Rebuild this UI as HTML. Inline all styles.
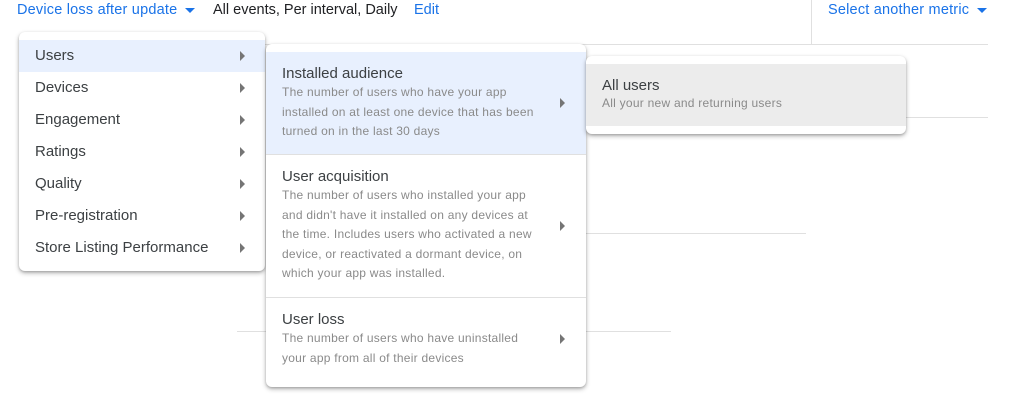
<!DOCTYPE html>
<html><head><style>
*{margin:0;padding:0;box-sizing:border-box}
body{width:1012px;height:406px;overflow:hidden;background:#fff;font-family:"Liberation Sans",sans-serif;position:relative;color:#3c4043}
.a{position:absolute}
.line{position:absolute;background:#e0e0e0}
.menu{position:absolute;background:#fff;border-radius:6px;box-shadow:0 2px 5px rgba(0,0,0,.3),0 1px 2px rgba(0,0,0,.15)}
.arr{position:absolute;width:0;height:0;border-top:5px solid transparent;border-bottom:5px solid transparent;border-left:5px solid #757575}
.t{position:absolute;left:16px;font-size:15px;color:#3c4043}
.d{position:absolute;left:16px;font-size:12px;letter-spacing:.25px;line-height:19.5px;color:#8a8a8a;width:258px}
.blue{color:#1a73e8}
.tri{display:inline-block;width:0;height:0;border-left:5px solid transparent;border-right:5px solid transparent;border-top:5px solid #1a73e8;vertical-align:middle;margin-left:8px}
</style></head><body>
<div class="a blue" style="left:17px;top:2px;font-size:14.5px;letter-spacing:.2px">Device loss after update<span class="tri"></span></div>
<div class="a" style="left:213px;top:2px;font-size:14.5px;color:#202124">All events, Per interval, Daily</div>
<div class="a blue" style="left:414px;top:2px;font-size:14.5px">Edit</div>
<div class="a blue" style="left:828px;top:2px;font-size:14.5px;letter-spacing:.2px">Select another metric<span class="tri"></span></div>
<div class="line" style="left:811px;top:0;width:1px;height:44px"></div>
<div class="line" style="left:230px;top:44px;width:758px;height:1px"></div>
<div class="line" style="left:900px;top:117px;width:88px;height:1px"></div>
<div class="line" style="left:586px;top:233px;width:220px;height:1px"></div>
<div class="line" style="left:237px;top:331px;width:434px;height:1px"></div>

<div class="menu" style="left:19px;top:32px;width:246px;height:239px">
 <div style="position:absolute;left:0;right:0;top:8px;height:32px;background:#e8f0fe"></div>
 <div class="t" style="top:15px">Users</div><div class="arr" style="left:221px;top:19px"></div>
 <div class="t" style="top:47px">Devices</div><div class="arr" style="left:221px;top:51px"></div>
 <div class="t" style="top:79px">Engagement</div><div class="arr" style="left:221px;top:83px"></div>
 <div class="t" style="top:111px">Ratings</div><div class="arr" style="left:221px;top:115px"></div>
 <div class="t" style="top:143px">Quality</div><div class="arr" style="left:221px;top:147px"></div>
 <div class="t" style="top:175px">Pre-registration</div><div class="arr" style="left:221px;top:179px"></div>
 <div class="t" style="top:207px">Store Listing Performance</div><div class="arr" style="left:221px;top:211px"></div>
</div>

<div class="menu" style="left:266px;top:44px;width:320px;height:343px">
 <div style="position:absolute;left:0;right:0;top:8px;height:102px;background:#e8f0fe"></div>
 <div class="t" style="top:21px">Installed audience</div>
 <div class="d" style="top:39px">The number of users who have your app installed on at least one device that has been turned on in the last 30 days</div>
 <div class="arr" style="left:294px;top:54px"></div>
 <div style="position:absolute;left:0;right:0;top:110px;height:1px;background:#e0e0e0"></div>
 <div class="t" style="top:124px">User acquisition</div>
 <div class="d" style="top:142px">The number of users who installed your app and didn't have it installed on any devices at the time. Includes users who activated a new device, or reactivated a dormant device, on which your app was installed.</div>
 <div class="arr" style="left:294px;top:177px"></div>
 <div style="position:absolute;left:0;right:0;top:253px;height:1px;background:#e0e0e0"></div>
 <div class="t" style="top:267px">User loss</div>
 <div class="d" style="top:285px">The number of users who have uninstalled your app from all of their devices</div>
 <div class="arr" style="left:294px;top:290px"></div>
</div>

<div class="menu" style="left:586px;top:56px;width:320px;height:78px">
 <div style="position:absolute;left:0;right:0;top:8px;height:62px;background:#ececec"></div>
 <div class="t" style="top:21px">All users</div>
 <div class="d" style="top:38px">All your new and returning users</div>
</div>
</body></html>
